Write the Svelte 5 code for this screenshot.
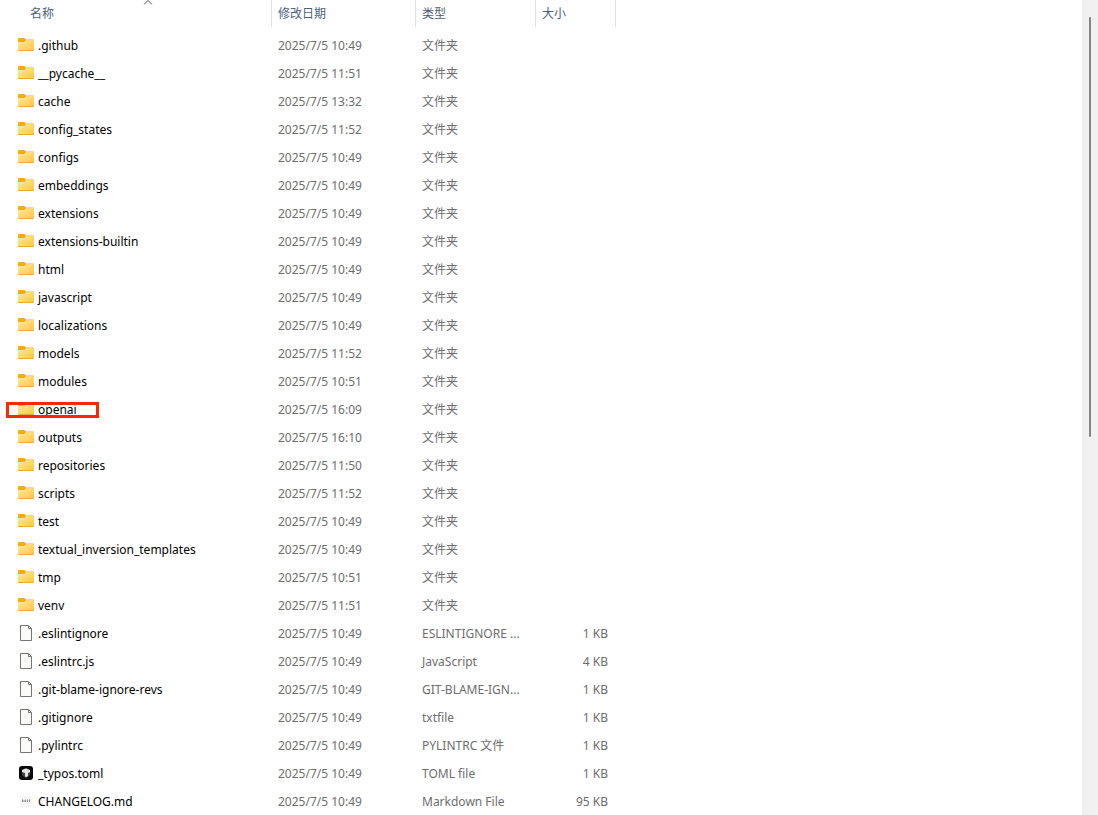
<script>
  const columns = ['修改日期', '类型', '大小'];

  const folder = (name, date) => ({ name, date, type: '文件夹', size: '', icon: 'folder' });
  const file = (name, type, size, icon = 'file') => ({ name, date: '2025/7/5 10:49', type, size, icon });

  const entries = [
    folder('.github', '2025/7/5 10:49'),
    folder('__pycache__', '2025/7/5 11:51'),
    folder('cache', '2025/7/5 13:32'),
    folder('config_states', '2025/7/5 11:52'),
    folder('configs', '2025/7/5 10:49'),
    folder('embeddings', '2025/7/5 10:49'),
    folder('extensions', '2025/7/5 10:49'),
    folder('extensions-builtin', '2025/7/5 10:49'),
    folder('html', '2025/7/5 10:49'),
    folder('javascript', '2025/7/5 10:49'),
    folder('localizations', '2025/7/5 10:49'),
    folder('models', '2025/7/5 11:52'),
    folder('modules', '2025/7/5 10:51'),
    folder('openai', '2025/7/5 16:09'),
    folder('outputs', '2025/7/5 16:10'),
    folder('repositories', '2025/7/5 11:50'),
    folder('scripts', '2025/7/5 11:52'),
    folder('test', '2025/7/5 10:49'),
    folder('textual_inversion_templates', '2025/7/5 10:49'),
    folder('tmp', '2025/7/5 10:51'),
    folder('venv', '2025/7/5 11:51'),
    file('.eslintignore', 'ESLINTIGNORE ...', '1 KB'),
    file('.eslintrc.js', 'JavaScript', '4 KB'),
    file('.git-blame-ignore-revs', 'GIT-BLAME-IGN...', '1 KB'),
    file('.gitignore', 'txtfile', '1 KB'),
    file('.pylintrc', 'PYLINTRC 文件', '1 KB'),
    file('_typos.toml', 'TOML file', '1 KB', 'toml'),
    file('CHANGELOG.md', 'Markdown File', '95 KB', 'markdown'),
  ];

  const marked = 'openai';
  const visible = 0.538;
</script>

<div class="explorer">
  <svg class="defs" aria-hidden="true">
    <linearGradient id="folder-fill" x1="0" y1="0" x2="1" y2="1">
      <stop offset="0" stop-color="#ffe9a6" />
      <stop offset="1" stop-color="#fdc63a" />
    </linearGradient>
  </svg>

  <main class="explorer__list">
    <table class="files">
      <colgroup>
        <col class="files__name-col">
        <col class="files__date-col">
        <col class="files__type-col">
        <col class="files__size-col">
      </colgroup>
      <thead>
        <tr>
          <th class="files__head files__head--name" aria-sort="ascending">
            <button class="files__sort" type="button">
              名称
              <svg class="files__caret" width="9" height="5" viewBox="0 0 9 5" aria-hidden="true">
                <path d="M.5 4.5l4-4 4 4" fill="none" stroke="#4a4a4a" />
              </svg>
            </button>
          </th>
          {#each columns as column}
            <th class="files__head">
              <button class="files__sort" type="button">{column}</button>
            </th>
          {/each}
        </tr>
      </thead>
      <tbody>
        {#each entries as entry (entry.name)}
          <tr>
            <td class="files__cell files__cell--name">
              <div class="entry">
                <svg class="entry__icon" width="16" height="16" viewBox="0 0 16 16" aria-hidden="true">
                  {#if entry.icon === 'folder'}
                    <path d="M0 2q0-1 1-1h5.500l1.500 1.500H15q1 0 1 1V6H0z" fill="#f3ad13" />
                    <path d="M0 5h6.500l1.500-2H15q1 0 1 1v9q0 1-1 1H1q-1 0-1-1z" fill="url(#folder-fill)" />
                    <path d="M.5 13.500h15" stroke="#e9ab2c" />
                  {:else if entry.icon === 'file'}
                    <path d="M2.500.5h8l3 3v12h-11z" fill="#fafafa" stroke="#777570" />
                    <path d="M10.500.5v3h3" fill="none" stroke="#777570" />
                  {:else if entry.icon === 'toml'}
                    <rect x="1" y="1" width="14" height="14" rx="3" fill="#080808" />
                    <path d="M4 5l4-2 4 2v5l-4 3-4-3z" fill="#444" />
                    <path d="M4 5l4-1.500L12 5v2l-2 1v3l-2 1.500L7 11V8L4 7z" fill="#e4e4e4" />
                  {:else}
                    <path d="M2 3l9-1 3 3v9l-11 .5z" fill="#f5f5f5" />
                    <path d="M4.500 9V6.500M6 7v2M7.500 6.500V9M9.500 6.500V9M11.500 6.500V9" fill="none" stroke="#8a8a8a" />
                  {/if}
                </svg>
                <span class="entry__name">{entry.name}</span>
                {#if entry.name === marked}
                  <span class="entry__mark"></span>
                {/if}
              </div>
            </td>
            <td class="files__cell">{entry.date}</td>
            <td class="files__cell">{entry.type}</td>
            <td class="files__cell files__cell--size">{entry.size}</td>
          </tr>
        {/each}
      </tbody>
    </table>
  </main>

  <div class="scrollbar" aria-hidden="true">
    <div class="scrollbar__thumb" style="flex-grow: {visible}"></div>
    <div style="flex-grow: {1 - visible}"></div>
  </div>
</div>

<style>
  :global(body) {
    background: #fff;
  }

  .explorer {
    display: flex;
    min-height: 100vh;
    font: 12px/16px "Noto Sans", "Noto Sans CJK SC", sans-serif;
    color: #6d6d6d;
  }

  .defs {
    position: absolute;
    width: 0;
    height: 0;
  }

  .explorer__list {
    flex: 1;
    min-width: 0;
  }

  .files {
    width: 616px;
    table-layout: fixed;
    border-collapse: separate;
    border-spacing: 0;
  }

  .files__name-col {
    width: 272px;
  }

  .files__date-col {
    width: 144px;
  }

  .files__type-col {
    width: 120px;
  }

  .files__size-col {
    width: 80px;
  }

  .files thead::after {
    content: "";
    display: block;
    height: 4px;
  }

  .files__head {
    height: 27px;
    padding: 0;
    border-right: 1px solid #e2e2e2;
  }

  .files__head--name {
    padding-left: 24px;
  }

  .files__sort {
    position: relative;
    display: block;
    width: 100%;
    height: 27px;
    padding: 0 6px;
    border: none;
    background: none;
    font: inherit;
    font-weight: 400;
    line-height: 28px;
    text-align: left;
    color: #4c607a;
  }

  .files__caret {
    position: absolute;
    top: 0;
    left: 50%;
    transform: translateX(-50%);
  }

  .files__cell {
    box-sizing: border-box;
    height: 28px;
    padding: 2px 6px 0;
    white-space: nowrap;
  }

  .files__cell--name {
    padding: 0 0 0 18px;
    color: #000;
  }

  .files__cell--size {
    padding-right: 8px;
    text-align: right;
  }

  .entry {
    position: relative;
    display: flex;
    align-items: center;
    gap: 4px;
  }

  .entry__icon {
    flex: none;
  }

  .entry__name {
    padding-top: 2px;
  }

  .entry__mark {
    position: absolute;
    top: 2px;
    left: -12px;
    box-sizing: border-box;
    width: 93px;
    height: 16px;
    border: 3px solid #ff2600;
  }

  .scrollbar {
    display: flex;
    flex-direction: column;
    align-items: center;
    box-sizing: border-box;
    width: 16px;
    padding: 17px 0;
    background: #f0f0f0;
  }

  .scrollbar__thumb {
    width: 2px;
    border-radius: 1px;
    background: #858585;
  }
</style>
